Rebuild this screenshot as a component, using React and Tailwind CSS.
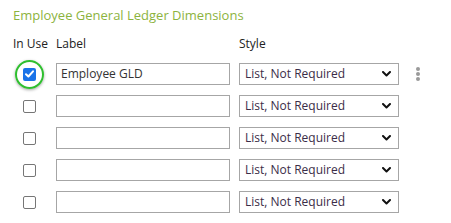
import React from 'react';

const rows = [
  { checked: true, label: 'Employee GLD', style: 'List, Not Required', menu: true },
  { checked: false, label: '', style: 'List, Not Required' },
  { checked: false, label: '', style: 'List, Not Required' },
  { checked: false, label: '', style: 'List, Not Required' },
  { checked: false, label: '', style: 'List, Not Required' },
];

const Checkbox = ({ checked }) => {
  if (!checked) {
    return <div className="w-[13px] h-[13px] bg-white border border-[#767676] rounded-[2px]"></div>;
  }
  return (
    <div className="relative w-[13px] h-[13px]">
      {/* highlight ring */}
      <div className="absolute left-[-8px] top-[-8px] w-[29px] h-[29px] rounded-full border-2 border-[#2fbf2f] shadow-[0_1px_3px_rgba(0,0,0,0.35)]"></div>
      <div className="w-[13px] h-[13px] bg-[#1a73e8] rounded-[2px] flex items-center justify-center">
        <svg width="9" height="8" viewBox="0 0 9 8" fill="none">
          <path d="M1 4.2 L3.4 6.5 L8 1.3" stroke="white" strokeWidth="2" strokeLinecap="round" strokeLinejoin="round" />
        </svg>
      </div>
    </div>
  );
};

const Kebab = () => (
  <div className="flex flex-col gap-[1px] ml-[17px]">
    <div className="w-[4px] h-[4px] rounded-full bg-[#9a9a9a]"></div>
    <div className="w-[4px] h-[4px] rounded-full bg-[#9a9a9a]"></div>
    <div className="w-[4px] h-[4px] rounded-full bg-[#9a9a9a]"></div>
  </div>
);

const Row = ({ row }) => (
  <div className="flex items-center h-[22px]">
    <div className="w-[43px] flex items-center pl-[10px]">
      <Checkbox checked={row.checked} />
    </div>
    <div className="w-[174px] h-[22px] border border-[#a6a6a6] bg-white flex items-center px-[4px] text-[12px] text-[#333]">
      {row.label}
    </div>
    <div className="ml-[9px] w-[160px] h-[22px] border border-[#a6a6a6] bg-white flex items-center justify-between pl-[5px] pr-[7px] text-[12px] text-[#3b2d48]">
      <span>{row.style}</span>
      <svg width="9" height="6" viewBox="0 0 9 6" fill="none">
        <path d="M1 1 L4.5 4.5 L8 1" stroke="#111" strokeWidth="2" strokeLinecap="round" strokeLinejoin="round" />
      </svg>
    </div>
    {row.menu && <Kebab />}
  </div>
);

export default function App() {
  return (
    <div className="w-[451px] h-[223px] bg-white overflow-hidden pl-[13px] pt-[5px] font-['Open_Sans',sans-serif]">
      <div className="text-[13px] leading-[20px] text-[#8cb33e]">Employee General Ledger Dimensions</div>
      <div className="flex text-[12px] leading-[16px] text-[#222] mt-[11px]">
        <div className="w-[43px]">In Use</div>
        <div className="w-[183px]">Label</div>
        <div>Style</div>
      </div>
      <div className="flex flex-col gap-[10px] mt-[11px]">
        {rows.map((r, i) => (
          <Row key={i} row={r} />
        ))}
      </div>
    </div>
  );
}
